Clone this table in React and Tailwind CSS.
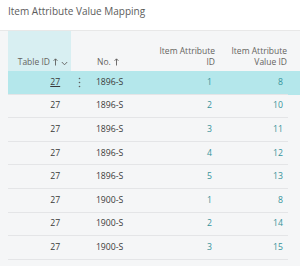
import React from 'react';

const rows = [
  { table: '27', no: '1896-S', attr: '1', value: '8' },
  { table: '27', no: '1896-S', attr: '2', value: '10' },
  { table: '27', no: '1896-S', attr: '3', value: '11' },
  { table: '27', no: '1896-S', attr: '4', value: '12' },
  { table: '27', no: '1896-S', attr: '5', value: '13' },
  { table: '27', no: '1900-S', attr: '1', value: '8' },
  { table: '27', no: '1900-S', attr: '2', value: '14' },
  { table: '27', no: '1900-S', attr: '3', value: '15' },
];

const ArrowUp = () => (
  <svg width="5" height="8" viewBox="0 0 5 8" className="inline-block ml-[3px] mb-[1px]">
    <path d="M2.5 7.5V1M0.6 2.8L2.5 0.8L4.4 2.8" fill="none" stroke="#605e5c" strokeWidth="0.9" />
  </svg>
);

const Chevron = () => (
  <svg width="7" height="5" viewBox="0 0 7 5" className="inline-block ml-[3px] mb-[1px]">
    <path d="M0.8 1L3.5 3.8L6.2 1" fill="none" stroke="#605e5c" strokeWidth="0.9" />
  </svg>
);

const App = () => {
  return (
    <div className="w-[300px] h-[266px] overflow-hidden bg-white font-['Open_Sans',sans-serif]">
      <div className="h-[30px] px-2 pt-[4px] text-[10px] leading-[15px] text-[#5c5c5c]">
        Item Attribute Value Mapping
      </div>

      <div className="h-[236px] bg-[#f5f6f7] border-t border-[#e8e8e8] pl-2">
        {/* Header */}
        <div className="flex h-[40px] text-[8.5px] leading-[11px] text-[#66645f]">
          <div className="w-[63px] bg-[#d8eff2] flex items-end justify-end pr-[3px] pb-[4px]">
            <span>Table ID</span>
            <ArrowUp />
            <Chevron />
          </div>
          <div className="w-[19px]" />
          <div className="w-[60px] flex items-end pl-[7px] pb-[4px]">
            <span>No.</span>
            <ArrowUp />
          </div>
          <div className="w-[69px] flex items-end justify-end text-right pr-[4px] pb-[4px]">
            Item Attribute
            <br />
            ID
          </div>
          <div className="w-[73px] flex items-end justify-end text-right pr-[5px] pb-[4px]">
            Item Attribute
            <br />
            Value ID
          </div>
        </div>

        {/* Rows */}
        {rows.map((r, i) => (
          <div key={i} className={i === 0 ? 'bg-[#b4e7eb]' : ''}>
            <div className="flex w-[280px] h-[23.6px] items-center border-b border-[#e4e5e7] text-[8.7px] text-[#3a3a3a]">
              <div className="w-[63px] text-right pr-[10px]">
                <span className={i === 0 ? 'underline' : ''}>{r.table}</span>
              </div>
              <div className="w-[19px] flex justify-center">
                {i === 0 && (
                  <svg width="3" height="11" viewBox="0 0 3 11">
                    <circle cx="1.5" cy="1.5" r="0.8" fill="#605e5c" />
                    <circle cx="1.5" cy="5.5" r="0.8" fill="#605e5c" />
                    <circle cx="1.5" cy="9.5" r="0.8" fill="#605e5c" />
                  </svg>
                )}
              </div>
              <div className="w-[60px] pl-[7px]">{r.no}</div>
              <div className="w-[69px] text-right pr-[4px] text-[#36939a]">{r.attr}</div>
              <div className="w-[73px] text-right pr-[5px] text-[#36939a]">{r.value}</div>
            </div>
          </div>
        ))}
      </div>
    </div>
  );
};

export default App;
